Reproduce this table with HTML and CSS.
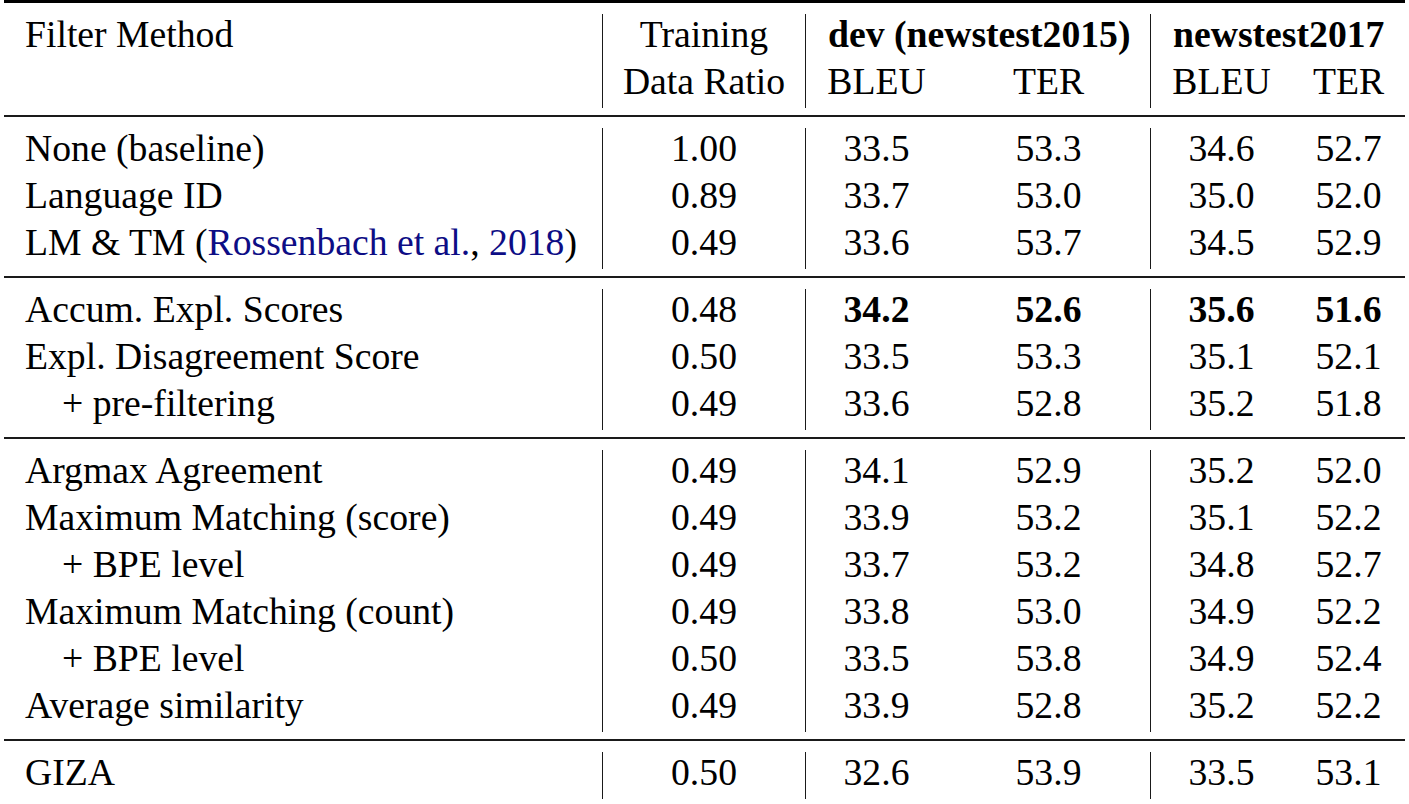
FILE: index.html
```html
<!DOCTYPE html>
<html>
<head>
<meta charset="utf-8">
<link rel="stylesheet" href="styles.css">
</head>
<body>
<table class="results">
  <colgroup>
    <col class="c-method">
    <col class="c-ratio">
    <col class="c-bleu">
    <col class="c-ter">
    <col class="c-bleu2">
    <col class="c-ter2">
  </colgroup>
  <tbody>
    <tr class="rule top"><td colspan="6"><div class="line"></div></td></tr>
    <tr>
      <td class="method">Filter Method</td>
      <td class="num vl">Training</td>
      <td class="grp vl" colspan="2">dev (newstest2015)</td>
      <td class="grp vl" colspan="2">newstest2017</td>
    </tr>
    <tr>
      <td class="method"></td>
      <td class="num vl">Data Ratio</td>
      <td class="num vl">BLEU</td>
      <td class="num">TER</td>
      <td class="num vl">BLEU</td>
      <td class="num">TER</td>
    </tr>
    <tr class="rule"><td colspan="6"><div class="line"></div></td></tr>

    <tr><td class="method">None (baseline)</td><td class="num vl">1.00</td><td class="num vl">33.5</td><td class="num">53.3</td><td class="num vl">34.6</td><td class="num">52.7</td></tr>
    <tr><td class="method">Language ID</td><td class="num vl">0.89</td><td class="num vl">33.7</td><td class="num">53.0</td><td class="num vl">35.0</td><td class="num">52.0</td></tr>
    <tr><td class="method">LM &amp; TM (<span class="cite">Rossenbach et al.</span>, <span class="cite">2018</span>)</td><td class="num vl">0.49</td><td class="num vl">33.6</td><td class="num">53.7</td><td class="num vl">34.5</td><td class="num">52.9</td></tr>
    <tr class="rule"><td colspan="6"><div class="line"></div></td></tr>

    <tr><td class="method">Accum. Expl. Scores</td><td class="num vl">0.48</td><td class="num vl best">34.2</td><td class="num best">52.6</td><td class="num vl best">35.6</td><td class="num best">51.6</td></tr>
    <tr><td class="method">Expl. Disagreement Score</td><td class="num vl">0.50</td><td class="num vl">33.5</td><td class="num">53.3</td><td class="num vl">35.1</td><td class="num">52.1</td></tr>
    <tr><td class="method sub">+ pre-filtering</td><td class="num vl">0.49</td><td class="num vl">33.6</td><td class="num">52.8</td><td class="num vl">35.2</td><td class="num">51.8</td></tr>
    <tr class="rule"><td colspan="6"><div class="line"></div></td></tr>

    <tr><td class="method">Argmax Agreement</td><td class="num vl">0.49</td><td class="num vl">34.1</td><td class="num">52.9</td><td class="num vl">35.2</td><td class="num">52.0</td></tr>
    <tr><td class="method">Maximum Matching (score)</td><td class="num vl">0.49</td><td class="num vl">33.9</td><td class="num">53.2</td><td class="num vl">35.1</td><td class="num">52.2</td></tr>
    <tr><td class="method sub">+ BPE level</td><td class="num vl">0.49</td><td class="num vl">33.7</td><td class="num">53.2</td><td class="num vl">34.8</td><td class="num">52.7</td></tr>
    <tr><td class="method">Maximum Matching (count)</td><td class="num vl">0.49</td><td class="num vl">33.8</td><td class="num">53.0</td><td class="num vl">34.9</td><td class="num">52.2</td></tr>
    <tr><td class="method sub">+ BPE level</td><td class="num vl">0.50</td><td class="num vl">33.5</td><td class="num">53.8</td><td class="num vl">34.9</td><td class="num">52.4</td></tr>
    <tr><td class="method">Average similarity</td><td class="num vl">0.49</td><td class="num vl">33.9</td><td class="num">52.8</td><td class="num vl">35.2</td><td class="num">52.2</td></tr>
    <tr class="rule"><td colspan="6"><div class="line"></div></td></tr>

    <tr><td class="method">GIZA</td><td class="num vl">0.50</td><td class="num vl">32.6</td><td class="num">53.9</td><td class="num vl">33.5</td><td class="num">53.1</td></tr>
    <tr class="rule"><td colspan="6"><div class="line"></div></td></tr>
  </tbody>
</table>
</body>
</html>
```

FILE: styles.css
```css
html, body {
  margin: 0;
  padding: 0;
  background: #ffffff;
}

body {
  font-family: "Liberation Serif", "Times New Roman", serif;
  font-size: 37.7px;
  color: #000000;
  overflow: hidden;
}

.results {
  margin-left: 4px;
  width: 1401px;
  table-layout: fixed;
  border-collapse: separate;
  border-spacing: 0;
}

.c-method { width: 598px; }
.c-ratio { width: 203px; }
.c-bleu { width: 142px; }
.c-ter { width: 203px; }
.c-bleu2 { width: 142px; }
.c-ter2 { width: 113px; }

.results td {
  padding: 0 0 6px 0;
  line-height: 41px;
  vertical-align: top;
  white-space: nowrap;
}

.results td.method {
  text-align: left;
  padding-left: 21px;
}

.results td.method.sub {
  padding-left: 58px;
}

.results td.num {
  text-align: center;
}

.results td.grp {
  text-align: left;
  padding-left: 22px;
  font-weight: bold;
}

.results td.vl {
  border-left: 1.5px solid #1a1a1a;
}

.best {
  font-weight: bold;
}

.cite {
  color: #0d0d85;
}

.results tr.rule td {
  padding: 7px 0 11px 0;
  line-height: 0;
}

.results tr.rule.top td {
  padding: 0 0 11px 0;
}

.line {
  height: 2px;
  background: #1a1a1a;
}

.top .line {
  height: 3px;
  background: #000000;
}
```
